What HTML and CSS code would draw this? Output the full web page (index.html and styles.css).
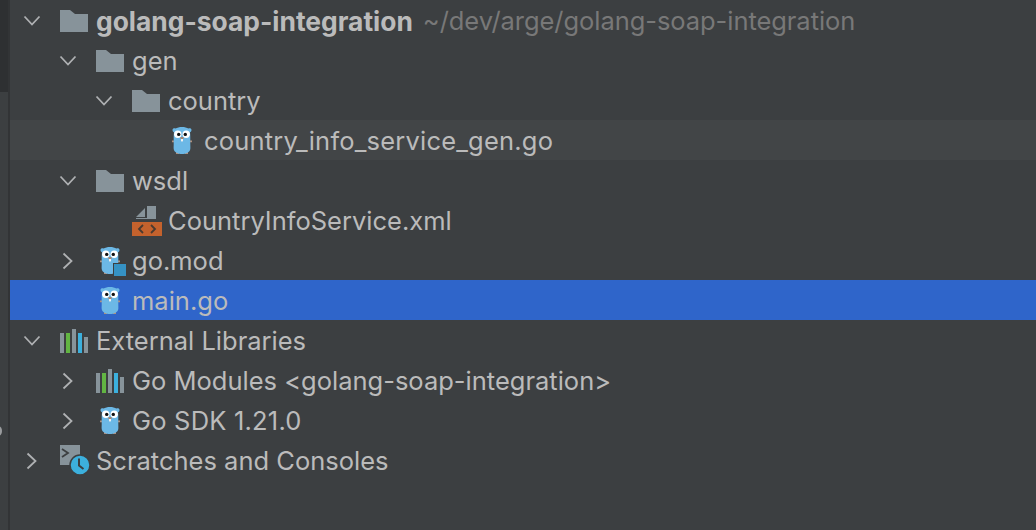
FILE: index.html
```html
<!DOCTYPE html>
<html lang="en">
<head>
<meta charset="utf-8">
<title>Project tree</title>
<link rel="stylesheet" href="styles.css">
</head>
<body>
<svg class="defs" width="0" height="0" aria-hidden="true">
  <defs>
    <symbol id="gopher" viewBox="0 0 20 28">
      <path d="M0 13.500h3v1.800H0zM17 13.500h3v1.800h-3z" fill="#b08f7c"/>
      <path d="M4 24.500h3v2.500H4zM13 24.500h3v2.500h-3z" fill="#b08f7c"/>
      <path d="M.5 3C.5 1.500 2.200.8 3.600 1.600 5 .6 7.500 0 10 0s5 .6 6.400 1.600C17.800.8 19.500 1.500 19.500 3c0 1.200-.7 2-1.500 2.300.4 2.700.3 6 .3 11.700 0 2 .2 3.500 0 5-.5 3.200-4.200 5-8.300 5s-7.800-1.800-8.300-5c-.2-1.500 0-3 0-5 0-5.700-.1-9 .3-11.700C1.200 5 .5 4.200.5 3z" fill="#6cb8e6"/>
      <circle cx="5.800" cy="7.200" r="3.700" fill="#fff"/>
      <circle cx="14.200" cy="7.200" r="3.700" fill="#fff"/>
      <circle cx="6.700" cy="7.400" r="1.700" fill="#111"/>
      <circle cx="13.300" cy="7.400" r="1.700" fill="#111"/>
      <ellipse cx="10" cy="11" rx="1.900" ry="1.100" fill="#a8806a"/>
      <rect x="9" y="12" width="2" height="2.400" fill="#f2f2f2"/>
    </symbol>
    <symbol id="folder" viewBox="0 0 28 22">
      <path d="M0 0h10l5 4h13v18H0z" fill="#87939a"/>
    </symbol>
    <symbol id="libs" viewBox="0 0 28 24">
      <rect x="0" y="4" width="4" height="20" fill="#87939a"/>
      <rect x="6" y="4" width="4" height="20" fill="#62b543"/>
      <rect x="12" y="0" width="4" height="24" fill="#87939a"/>
      <rect x="18" y="4" width="4" height="20" fill="#3cb0dd"/>
      <rect x="24" y="8" width="4" height="16" fill="#87939a"/>
    </symbol>
    <symbol id="open" viewBox="0 0 18 12">
      <path d="M1.500 1.500 9 9.500l7.500-8" fill="none" stroke="#afb1b3" stroke-width="1.800"/>
    </symbol>
    <symbol id="closed" viewBox="0 0 12 18">
      <path d="M1.500 1.500 9.500 9l-8 7.500" fill="none" stroke="#afb1b3" stroke-width="1.800"/>
    </symbol>
  </defs>
</svg>
<div class="gutter"><div class="gutter-top"></div><div class="gutter-mark"></div></div>
<main class="tree">
  <div class="row l0"><svg class="arrow-open"><use href="#open"/></svg><svg class="icon folder"><use href="#folder"/></svg><span class="name strong">golang-soap-integration</span><span class="path">~/dev/arge/golang-soap-integration</span></div>
  <div class="row l1"><svg class="arrow-open"><use href="#open"/></svg><svg class="icon folder"><use href="#folder"/></svg><span class="name">gen</span></div>
  <div class="row l2"><svg class="arrow-open"><use href="#open"/></svg><svg class="icon folder"><use href="#folder"/></svg><span class="name">country</span></div>
  <div class="row l3 hover"><span class="arrow-none"></span><svg class="icon go"><use href="#gopher"/></svg><span class="name wide">country_info_service_gen.go</span></div>
  <div class="row l1"><svg class="arrow-open"><use href="#open"/></svg><svg class="icon folder"><use href="#folder"/></svg><span class="name">wsdl</span></div>
  <div class="row l2"><span class="arrow-none"></span><svg class="icon xml" viewBox="0 0 30 30"><path d="M4 11 13 2v9zM15 0h9v13H4v-1h11z" fill="#87939a"/><rect y="16" width="30" height="14" fill="#c4622d"/><path d="M11 19l-4 4 4 4M19 19l4 4-4 4" fill="none" stroke="#4a3a30" stroke-width="1.800"/></svg><span class="name">CountryInfoService.xml</span></div>
  <div class="row l1"><svg class="arrow-closed"><use href="#closed"/></svg><span class="icon-wrap"><svg class="icon go"><use href="#gopher"/></svg><span class="mod-badge"></span></span><span class="name">go.mod</span></div>
  <div class="row l1 selected"><span class="arrow-none"></span><svg class="icon go"><use href="#gopher"/></svg><span class="name">main.go</span></div>
  <div class="row l0"><svg class="arrow-open"><use href="#open"/></svg><svg class="icon lib"><use href="#libs"/></svg><span class="name">External Libraries</span></div>
  <div class="row l1"><svg class="arrow-closed"><use href="#closed"/></svg><svg class="icon lib"><use href="#libs"/></svg><span class="name">Go Modules &lt;golang-soap-integration&gt;</span></div>
  <div class="row l1"><svg class="arrow-closed"><use href="#closed"/></svg><svg class="icon go"><use href="#gopher"/></svg><span class="name sdk">Go SDK 1.21.0</span></div>
  <div class="row l0"><svg class="arrow-closed"><use href="#closed"/></svg><svg class="icon scratch" viewBox="0 0 32 32"><path d="M0 0h20v20H0z" fill="#87939a"/><path d="M2 4l6 4-6 4" fill="none" stroke="#3c3f41" stroke-width="1.800"/><circle cx="20" cy="20" r="10" fill="#3cb0dd" stroke="#3c3f41" stroke-width="1.500"/><path d="M19 13.500V20.500l4.500 3.500" fill="none" stroke="#3c3f41" stroke-width="2"/></svg><span class="name">Scratches and Consoles</span></div>
</main>
</body>
</html>
```
FILE: styles.css
```css
* { box-sizing: border-box; }
html, body { margin: 0; height: 530px; overflow: hidden; }
body { display: flex; background: #3c3f41; font-family: Inter, "Liberation Sans", sans-serif; color: #bbbbbb; }
.defs { position: absolute; }
.gutter { position: relative; width: 10px; flex: none; border-right: 2px solid #323436; }
.gutter-top { height: 92px; background: #2e3032; }
.gutter-mark { position: absolute; left: -5px; top: 426px; width: 7px; height: 10px; border-radius: 50%; background: #9a9c9e; }
.tree { flex: 1; min-width: 0; }
.row { height: 40px; display: flex; align-items: center; padding-top: 1px; font-size: 25.5px; white-space: nowrap; }
.l0 { padding-left: 13px; }
.l1 { padding-left: 49px; }
.l2 { padding-left: 85px; }
.l3 { padding-left: 121px; }
.hover { background: #424547; }
.selected { background: #2f65ca; }
.arrow-open { width: 18px; height: 12px; flex: none; margin-right: 19px; }
.arrow-closed { width: 12px; height: 18px; flex: none; margin: 0 22px 0 3px; }
.arrow-none { width: 18px; flex: none; margin-right: 19px; }
.icon { flex: none; display: block; }
.folder { width: 28px; height: 22px; margin-right: 8px; }
.go { width: 20px; height: 28px; margin: 0 12px 0 4px; }
.lib { width: 28px; height: 24px; margin-right: 8px; }
.xml { width: 30px; height: 30px; margin-right: 6px; }
.scratch { width: 32px; height: 32px; margin-right: 4px; }
.icon-wrap { position: relative; display: block; flex: none; }
.mod-badge { position: absolute; left: 18px; top: 17px; width: 12px; height: 12px; background: #3592c4; box-shadow: 0 0 0 1px #3c3f41; }
.wide { letter-spacing: 0.2px; }
.sdk { letter-spacing: 0.2px; }
.strong { font-weight: 700; font-size: 26.4px; }
.path { margin-left: 10px; color: #787878; letter-spacing: -0.06px; }
```
